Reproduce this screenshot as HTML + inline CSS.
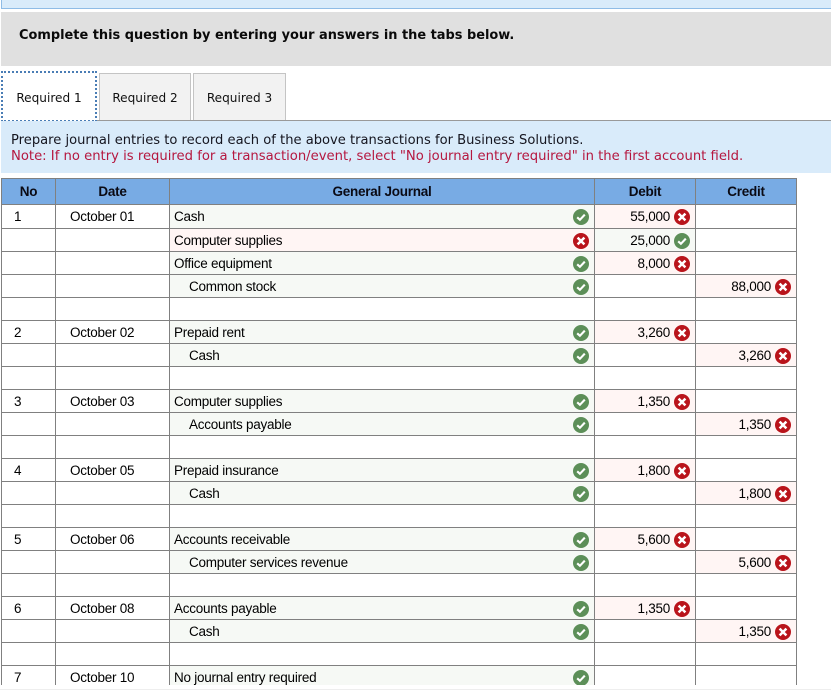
<!DOCTYPE html>
<html><head><meta charset="utf-8">
<style>
html,body{margin:0;padding:0;background:#fff;width:831px;height:693px;overflow:hidden}
body{position:relative;font-family:"Liberation Sans",Arial,sans-serif;color:#000}
.abs{position:absolute}
.v{font-family:"DejaVu Sans",Verdana,sans-serif}
.tab{position:absolute;top:73px;height:46px;line-height:48px;text-align:center;font-size:12.1px;box-sizing:content-box;background:#f2f2f2;border:1px solid #c4c4c4;border-bottom:none;font-family:"DejaVu Sans",Verdana,sans-serif;color:#111}
table{position:absolute;left:1px;top:178px;border-collapse:collapse;table-layout:fixed;width:795px}
td,th{border:1px solid #808080;padding:2px 0 0;height:20px;font-size:13.5px;letter-spacing:-.25px;line-height:20px;position:relative;overflow:hidden;white-space:nowrap;font-weight:normal}
th{background:#78abe4;height:25px;padding:0;font-weight:bold;text-align:center;color:#0a0a14}
td.n{padding-left:12px}
td.d{padding-left:14px}
td.a{padding-left:4px}
td.i{padding-left:19px}
td.m{text-align:right;padding-right:25px}
.g{background:#f6f9f5}
.p{background:#fff5f4}
.r1 td{padding-top:0;height:23px}
svg.ic{position:absolute;right:5px;top:3.5px;width:16px;height:16px}
</style></head><body>
<svg width="0" height="0" style="position:absolute"><defs>
<symbol id="ok" viewBox="0 0 16 16"><circle cx="8" cy="8" r="8" fill="#5c8f58"/><path d="M4.2 8.3L6.9 10.8L11.8 5.6" fill="none" stroke="#fff" stroke-width="2.1"/></symbol>
<symbol id="no" viewBox="0 0 16 16"><circle cx="8" cy="8" r="8" fill="#b9141b"/><path d="M4.6 4.6L11.4 11.4M11.4 4.6L4.6 11.4" fill="none" stroke="#fff" stroke-width="2.5"/></symbol>
</defs></svg>

<div class="abs" style="left:1px;top:0;width:830px;height:8px;background:#d9ebfa;border-left:1px solid #8fbce6;border-bottom:1px solid #8fbce6;box-sizing:content-box"></div>
<div class="abs" style="left:1px;top:12px;width:830px;height:54px;background:#e0e0e0"></div>
<div class="abs v" style="left:19px;top:27px;font-size:12.93px;line-height:18px;font-weight:bold;color:#0a0a0a;white-space:nowrap">Complete this question by entering your answers in the tabs below.</div>

<div class="abs" style="left:1px;top:120px;width:830px;height:1px;background:#999"></div>
<div class="tab" style="left:99px;width:90px">Required 2</div>
<div class="tab" style="left:193px;width:91px">Required 3</div>
<div class="abs v" style="left:1px;top:71px;width:92px;height:47px;line-height:50px;border:2px dotted #4a7db5;background:#fff;text-align:center;font-size:12.1px;color:#111">Required 1</div>

<div class="abs" style="left:1px;top:121px;width:830px;height:52px;background:#d9ebfa"></div>
<div class="abs v" style="left:11px;top:133px;font-size:13.1px;line-height:16px;color:#15151f;white-space:nowrap">Prepare journal entries to record each of the above transactions for Business Solutions.</div>
<div class="abs v" style="left:11px;top:149px;font-size:13.18px;line-height:16px;color:#b5173f;white-space:nowrap">Note: If no entry is required for a transaction/event, select "No journal entry required" in the first account field.</div>

<div class="abs" style="left:0;top:0;width:831px;height:685px;overflow:hidden">
<table>
<colgroup><col style="width:54px"><col style="width:114px"><col style="width:425px"><col style="width:101px"><col style="width:101px"></colgroup>
<tr><th>No</th><th>Date</th><th>General Journal</th><th>Debit</th><th>Credit</th></tr>
<tr class="r1"><td class="n">1</td><td class="d">October 01</td><td class="a g">Cash<svg class="ic"><use href="#ok"/></svg></td><td class="m p">55,000<svg class="ic"><use href="#no"/></svg></td><td></td></tr>
<tr><td></td><td></td><td class="a p">Computer supplies<svg class="ic"><use href="#no"/></svg></td><td class="m g">25,000<svg class="ic"><use href="#ok"/></svg></td><td></td></tr>
<tr><td></td><td></td><td class="a g">Office equipment<svg class="ic"><use href="#ok"/></svg></td><td class="m p">8,000<svg class="ic"><use href="#no"/></svg></td><td></td></tr>
<tr><td></td><td></td><td class="i g">Common stock<svg class="ic"><use href="#ok"/></svg></td><td></td><td class="m p">88,000<svg class="ic"><use href="#no"/></svg></td></tr>
<tr><td></td><td></td><td></td><td></td><td></td></tr>
<tr><td class="n">2</td><td class="d">October 02</td><td class="a g">Prepaid rent<svg class="ic"><use href="#ok"/></svg></td><td class="m p">3,260<svg class="ic"><use href="#no"/></svg></td><td></td></tr>
<tr><td></td><td></td><td class="i g">Cash<svg class="ic"><use href="#ok"/></svg></td><td></td><td class="m p">3,260<svg class="ic"><use href="#no"/></svg></td></tr>
<tr><td></td><td></td><td></td><td></td><td></td></tr>
<tr><td class="n">3</td><td class="d">October 03</td><td class="a g">Computer supplies<svg class="ic"><use href="#ok"/></svg></td><td class="m p">1,350<svg class="ic"><use href="#no"/></svg></td><td></td></tr>
<tr><td></td><td></td><td class="i g">Accounts payable<svg class="ic"><use href="#ok"/></svg></td><td></td><td class="m p">1,350<svg class="ic"><use href="#no"/></svg></td></tr>
<tr><td></td><td></td><td></td><td></td><td></td></tr>
<tr><td class="n">4</td><td class="d">October 05</td><td class="a g">Prepaid insurance<svg class="ic"><use href="#ok"/></svg></td><td class="m p">1,800<svg class="ic"><use href="#no"/></svg></td><td></td></tr>
<tr><td></td><td></td><td class="i g">Cash<svg class="ic"><use href="#ok"/></svg></td><td></td><td class="m p">1,800<svg class="ic"><use href="#no"/></svg></td></tr>
<tr><td></td><td></td><td></td><td></td><td></td></tr>
<tr><td class="n">5</td><td class="d">October 06</td><td class="a g">Accounts receivable<svg class="ic"><use href="#ok"/></svg></td><td class="m p">5,600<svg class="ic"><use href="#no"/></svg></td><td></td></tr>
<tr><td></td><td></td><td class="i g">Computer services revenue<svg class="ic"><use href="#ok"/></svg></td><td></td><td class="m p">5,600<svg class="ic"><use href="#no"/></svg></td></tr>
<tr><td></td><td></td><td></td><td></td><td></td></tr>
<tr><td class="n">6</td><td class="d">October 08</td><td class="a g">Accounts payable<svg class="ic"><use href="#ok"/></svg></td><td class="m p">1,350<svg class="ic"><use href="#no"/></svg></td><td></td></tr>
<tr><td></td><td></td><td class="i g">Cash<svg class="ic"><use href="#ok"/></svg></td><td></td><td class="m p">1,350<svg class="ic"><use href="#no"/></svg></td></tr>
<tr><td></td><td></td><td></td><td></td><td></td></tr>
<tr><td class="n">7</td><td class="d">October 10</td><td class="a g">No journal entry required<svg class="ic"><use href="#ok"/></svg></td><td></td><td></td></tr>
</table>
</div>
<div class="abs" style="left:0;top:689px;width:831px;height:1px;background:#eee"></div>
</body></html>
